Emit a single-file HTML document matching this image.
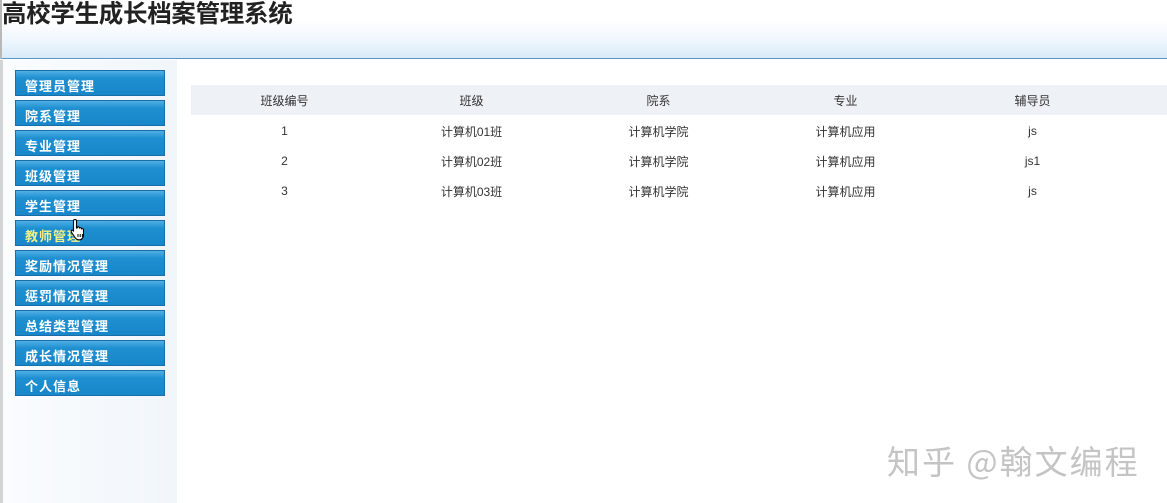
<!DOCTYPE html>
<html><head><meta charset="utf-8"><style>
*{margin:0;padding:0;box-sizing:border-box}
body{width:1167px;height:503px;overflow:hidden;background:#fff;font-family:"Liberation Sans","Noto Sans CJK SC",sans-serif;position:relative}
.title{position:absolute;left:2px;top:0;font-size:24.5px;font-weight:bold;color:#222;line-height:30px;letter-spacing:-0.3px}
.hdr{position:absolute;left:2px;top:20px;width:1165px;height:39px;background:linear-gradient(to bottom,#fff 0%,#eef6fd 55%,#d8ebf9 100%);border-bottom:1px solid #5d93c2}
.lb{position:absolute;left:0;top:0;width:2px;height:59px;background:#b8b8b8}
.side{position:absolute;left:0;top:60px;width:177px;height:443px;background:linear-gradient(to right,#fafcfe,#f1f6fb)}
.side .gl{position:absolute;left:0;top:0;width:3px;height:443px;background:#d4d4d4}
.btn{position:absolute;left:15px;width:150px;height:26px;background:linear-gradient(to bottom,#4fb0e4 0%,#1e8fd0 30%,#1887ca 100%);border:1px solid #1a6ea8;color:#fff;font-size:13px;font-weight:bold;line-height:31px;padding-left:9px;letter-spacing:1px}
.btn.h{color:#f3f08a}
table{position:absolute;left:191px;top:85px;width:976px;border-collapse:collapse;font-size:12px;color:#333;table-layout:fixed}
th{font-weight:normal;height:30px;background:#eef1f6;width:187px;text-align:center}
th:last-child{width:41px}
td{height:30px;text-align:center;padding-top:2px}
.wm{position:absolute;left:887px;top:436px;font-size:33px;color:#c4c4c4;letter-spacing:2px;font-family:"Noto Sans CJK SC",sans-serif}
</style></head><body>
<div class="hdr"></div>
<div class="lb"></div>
<div class="title">高校学生成长档案管理系统</div>
<div class="side"><div class="gl"></div></div>
<div class="btn" style="top:70px">管理员管理</div>
<div class="btn" style="top:100px">院系管理</div>
<div class="btn" style="top:130px">专业管理</div>
<div class="btn" style="top:160px">班级管理</div>
<div class="btn" style="top:190px">学生管理</div>
<div class="btn h" style="top:220px">教师管理</div>
<div class="btn" style="top:250px">奖励情况管理</div>
<div class="btn" style="top:280px">惩罚情况管理</div>
<div class="btn" style="top:310px">总结类型管理</div>
<div class="btn" style="top:340px">成长情况管理</div>
<div class="btn" style="top:370px">个人信息</div>
<svg style="position:absolute;left:70px;top:218px" width="18" height="24" viewBox="0 0 18 24"><path d="M5 1.5c1 0 1.5.7 1.5 1.5v7l1-.3V9c.8-.6 2 0 2 .9.8-.6 2-.1 2 .9.8-.5 2 0 2 1v5c0 2.5-1.5 5-4 5H8.5c-1.5 0-2.5-1-3.5-2.2L1.3 14c-.7-1 .5-2.3 1.6-1.5L3.5 13V3c0-.8.6-1.5 1.5-1.5z" fill="#fff" stroke="#000" stroke-width="1.1"/><path d="M8 16v3M10.2 16v3M12.4 16v3" stroke="#000" stroke-width="1"/></svg>
<table>
<tr><th>班级编号</th><th>班级</th><th>院系</th><th>专业</th><th>辅导员</th><th></th></tr>
<tr><td>1</td><td>计算机01班</td><td>计算机学院</td><td>计算机应用</td><td>js</td><td></td></tr>
<tr><td>2</td><td>计算机02班</td><td>计算机学院</td><td>计算机应用</td><td>js1</td><td></td></tr>
<tr><td>3</td><td>计算机03班</td><td>计算机学院</td><td>计算机应用</td><td>js</td><td></td></tr>
</table>
<div class="wm">知乎 @翰文编程</div>
</body></html>
